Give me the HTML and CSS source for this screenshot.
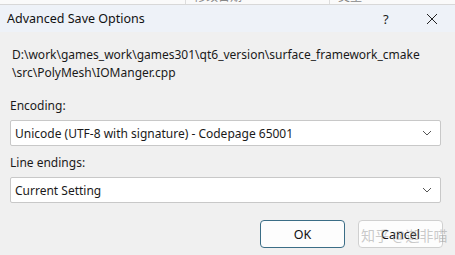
FILE: index.html
```html
<!DOCTYPE html>
<html lang="en">
<head>
    <meta charset="UTF-8">
    <title>Advanced Save Options</title>
    <link rel="stylesheet" href="styles.css">
</head>
<body>
    <div class="behind">
        <span class="col col-date">修改日期</span>
        <span class="col col-type">类型</span>
    </div>
    <div class="dialog">
        <div class="titlebar">
            <span class="title">Advanced Save Options</span>
            <span class="help">?</span>
            <svg class="close" width="12" height="12" viewBox="0 0 12 12">
                <path d="M1 1L11 11M11 1L1 11" stroke="#222" stroke-width="1" fill="none"/>
            </svg>
        </div>
        <div class="body">
            <div class="path">D:\work\games_work\games301\qt6_version\surface_framework_cmake<br>\src\PolyMesh\IOManger.cpp</div>

            <label class="label">Encoding:</label>
            <div class="select">
                <span>Unicode (UTF-8 with signature) - Codepage 65001</span>
                <svg width="10" height="6" viewBox="0 0 10 6"><path d="M1 1L5 5L9 1" stroke="#555" fill="none"/></svg>
            </div>

            <label class="label">Line endings:</label>
            <div class="select">
                <span>Current Setting</span>
                <svg width="10" height="6" viewBox="0 0 10 6"><path d="M1 1L5 5L9 1" stroke="#555" fill="none"/></svg>
            </div>

            <div class="buttons">
                <button class="btn default">OK</button>
                <button class="btn">Cancel</button>
            </div>
        </div>
    </div>
    <div class="watermark">知乎 @迦非喵</div>
</body>
</html>
```

FILE: styles.css
```css
html {
    overflow: hidden;
}
body {
    margin: 0;
    width: 455px;
    height: 255px;
    overflow: hidden;
    background: #f0f0f0;
    font-family: "Noto Sans", "Noto Sans CJK SC", sans-serif;
    color: #1a1a1a;
    position: relative;
}
.behind {
    height: 4px;
    background: #fafafa;
    border-bottom: 1px solid #d8d8d8;
    overflow: hidden;
    position: relative;
    font-size: 12px;
    color: #888;
}
.col {
    position: absolute;
    top: -10px;
    line-height: 14px;
    padding-left: 8px;
    border-left: 1px solid #ddd;
    height: 20px;
}
.col-date { left: 185px; }
.col-type { left: 329px; }
.dialog {
    display: flex;
    flex-direction: column;
}
.titlebar {
    height: 27px;
    background: #eef2f8;
    display: flex;
    align-items: center;
    padding: 0 0 0 7px;
    font-size: 12.5px;
}
.title {
    flex: 1;
    color: #111;
}
.help {
    width: 14px;
    margin-right: 29px;
    font-size: 13px;
}
.close {
    margin-right: 17px;
}
.body {
    padding: 14px 12px 0 10px;
    font-size: 12px;
}
.path {
    line-height: 18px;
    padding-left: 2px;
    margin-bottom: 15px;
}
.label {
    display: block;
    line-height: 18px;
    margin-bottom: 5px;
}
.select {
    height: 24px;
    background: #fff;
    border: 1px solid #c8c8c8;
    border-radius: 2px;
    display: flex;
    align-items: center;
    justify-content: space-between;
    padding: 0 8px 0 4px;
    margin: 0 2px 8px 0;
}
.buttons {
    display: flex;
    justify-content: flex-end;
    gap: 13px;
    margin-top: 17px;
}
.btn {
    width: 85px;
    height: 28px;
    background: #fdfdfd;
    border: 1px solid #d0d0d0;
    border-radius: 4px;
    font-family: "Noto Sans", sans-serif;
    font-size: 12.5px;
    color: #111;
}
.btn.default {
    border: 1px solid #3b6d86;
}
.watermark {
    position: absolute;
    left: 361px;
    top: 225px;
    font-size: 14px;
    color: rgba(150, 150, 150, 0.5);
    font-family: "Noto Sans CJK SC", sans-serif;
    pointer-events: none;
}
```
